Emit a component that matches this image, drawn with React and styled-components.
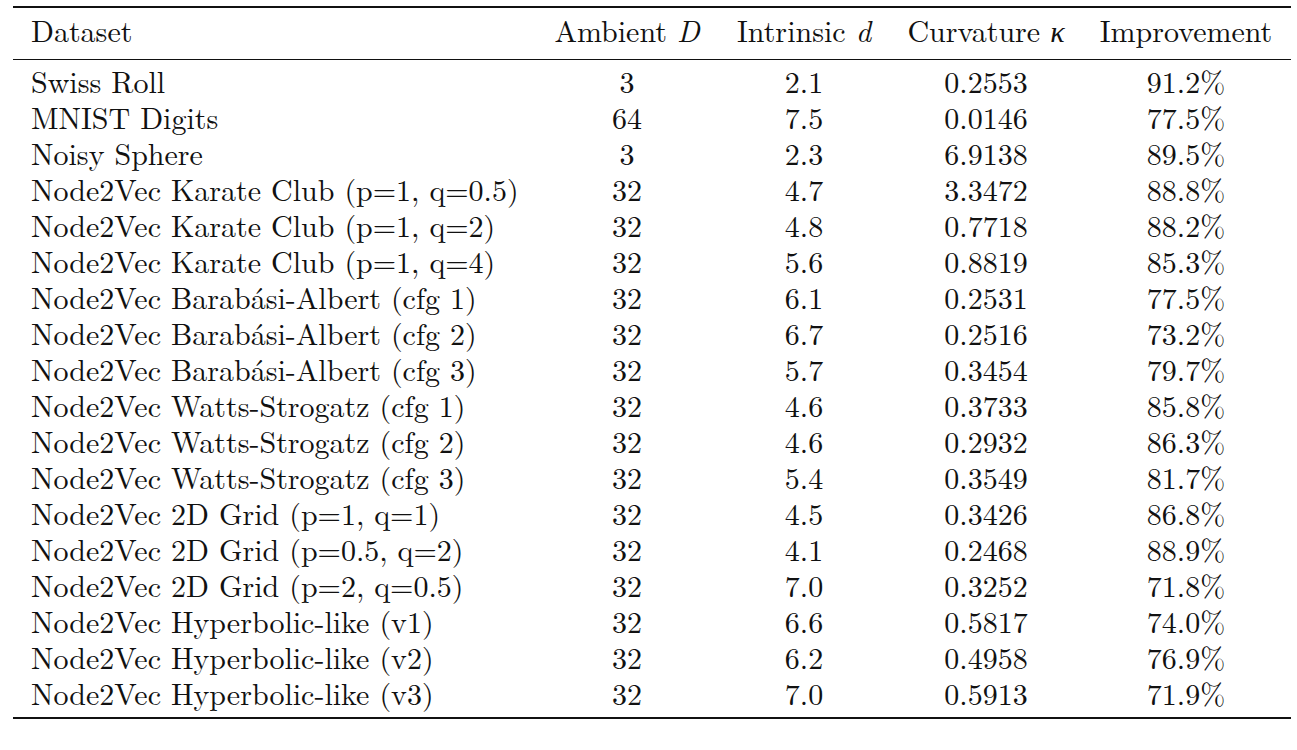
import React from "react";
import styled, { createGlobalStyle } from "styled-components";

const GlobalStyle = createGlobalStyle`
  body {
    margin: 0;
    background: #fff;
    color: #111;
    font-family: "Latin Modern Roman", "Liberation Serif", serif;
  }
`;

const rows = [
  ["Swiss Roll", "3", "2.1", "0.2553", "91.2%"],
  ["MNIST Digits", "64", "7.5", "0.0146", "77.5%"],
  ["Noisy Sphere", "3", "2.3", "6.9138", "89.5%"],
  ["Node2Vec Karate Club (p=1, q=0.5)", "32", "4.7", "3.3472", "88.8%"],
  ["Node2Vec Karate Club (p=1, q=2)", "32", "4.8", "0.7718", "88.2%"],
  ["Node2Vec Karate Club (p=1, q=4)", "32", "5.6", "0.8819", "85.3%"],
  ["Node2Vec Barabási-Albert (cfg 1)", "32", "6.1", "0.2531", "77.5%"],
  ["Node2Vec Barabási-Albert (cfg 2)", "32", "6.7", "0.2516", "73.2%"],
  ["Node2Vec Barabási-Albert (cfg 3)", "32", "5.7", "0.3454", "79.7%"],
  ["Node2Vec Watts-Strogatz (cfg 1)", "32", "4.6", "0.3733", "85.8%"],
  ["Node2Vec Watts-Strogatz (cfg 2)", "32", "4.6", "0.2932", "86.3%"],
  ["Node2Vec Watts-Strogatz (cfg 3)", "32", "5.4", "0.3549", "81.7%"],
  ["Node2Vec 2D Grid (p=1, q=1)", "32", "4.5", "0.3426", "86.8%"],
  ["Node2Vec 2D Grid (p=0.5, q=2)", "32", "4.1", "0.2468", "88.9%"],
  ["Node2Vec 2D Grid (p=2, q=0.5)", "32", "7.0", "0.3252", "71.8%"],
  ["Node2Vec Hyperbolic-like (v1)", "32", "6.6", "0.5817", "74.0%"],
  ["Node2Vec Hyperbolic-like (v2)", "32", "6.2", "0.4958", "76.9%"],
  ["Node2Vec Hyperbolic-like (v3)", "32", "7.0", "0.5913", "71.9%"],
];

const Page = styled.div`
  padding-top: 6px;
  padding-left: 13px;
`;

const Table = styled.div`
  width: 1278px;
`;

const Rule = styled.div`
  height: ${(p) => p.$thick}px;
  background: #111;
`;

const Head = styled.div`
  padding: 7px 0 8px;
`;

const Body = styled.div`
  padding: 5px 0 4px;
`;

const Row = styled.div`
  display: grid;
  grid-template-columns: 524px 180px 174px 190px 210px;
  height: 36px;
  align-items: start;
  font-family: "Latin Modern Roman", "Liberation Serif", serif;
  font-size: 30px;
  line-height: ${(p) => (p.$head ? "30px" : "31px")};
  color: #111;
`;

const Cell = styled.div`
  text-align: ${(p) => (p.$left ? "left" : "center")};
  padding-left: ${(p) => (p.$left ? "18px" : "0")};
  white-space: nowrap;
`;

const Var = styled.i`
  font-style: italic;
`;

export default function App() {
  return (
    <Page>
      <GlobalStyle />
      <Table>
        <Rule $thick={2} />
        <Head>
          <Row $head>
            <Cell $left>Dataset</Cell>
            <Cell>
              Ambient <Var>D</Var>
            </Cell>
            <Cell>
              Intrinsic <Var>d</Var>
            </Cell>
            <Cell>
              Curvature <Var>κ</Var>
            </Cell>
            <Cell>Improvement</Cell>
          </Row>
        </Head>
        <Rule $thick={1} />
        <Body>
          {rows.map((r) => (
            <Row key={r[0]}>
              <Cell $left>{r[0]}</Cell>
              <Cell>{r[1]}</Cell>
              <Cell>{r[2]}</Cell>
              <Cell>{r[3]}</Cell>
              <Cell>{r[4]}</Cell>
            </Row>
          ))}
        </Body>
        <Rule $thick={2} />
      </Table>
    </Page>
  );
}
